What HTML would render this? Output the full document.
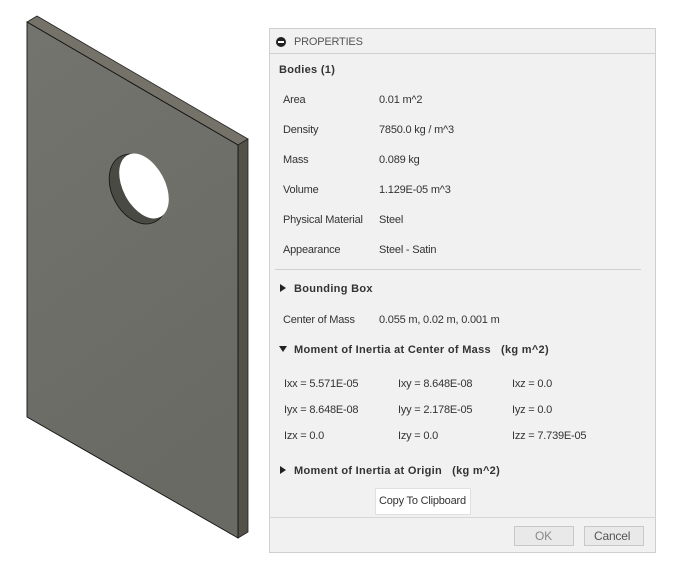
<!DOCTYPE html>
<html><head><style>
*{margin:0;padding:0;box-sizing:border-box}
body{width:677px;height:572px;background:#fff;position:relative;overflow:hidden;font-family:"Liberation Sans",sans-serif;font-size:11px;color:#333;letter-spacing:-0.2px}
.t{position:absolute;white-space:nowrap;line-height:12px}
.b{font-weight:bold;color:#333;letter-spacing:0.3px}
#panel{position:absolute;left:269px;top:28px;width:387px;height:525px;background:#f1f1f1;border:1px solid #cfcfcf}
.tri{position:absolute;width:0;height:0}
</style></head><body>
<svg width="260" height="572" style="position:absolute;left:0;top:0">
<defs><linearGradient id="g" x1="0" y1="0" x2="0.3" y2="1"><stop offset="0" stop-color="#74746e"/><stop offset="1" stop-color="#6a6a64"/></linearGradient></defs>
<polygon points="27,22 37,16 248,139 238,145" fill="#75726a" stroke="#222" stroke-width="0.8" stroke-linejoin="round"/>
<polygon points="238,145 248,139 248,532 238,538" fill="#545149" stroke="#222" stroke-width="0.8"/>
<polygon points="27,22 238,145 238,538 27,417" fill="url(#g)" stroke="#111" stroke-width="0.9"/>
<ellipse cx="138" cy="189" rx="26" ry="37" transform="rotate(-28 138 189)" fill="#4a4a45" stroke="#111" stroke-width="0.8"/>
<ellipse cx="144" cy="186" rx="21" ry="35" transform="rotate(-28 144 186)" fill="#fff"/>
</svg>
<div id="panel"></div>
<div style="position:absolute;left:269px;top:53px;width:387px;height:1px;background:#cfcfcf"></div>
<div style="position:absolute;left:276px;top:37px;width:10px;height:10px;border-radius:50%;background:#222"></div>
<div style="position:absolute;left:278px;top:41px;width:6px;height:2px;background:#fff"></div>
<div class="t" style="left:294px;top:36px;color:#555">PROPERTIES</div>
<div class="t b" style="left:279px;top:64px">Bodies (1)</div>
<div class="t" style="left:283px;top:94px">Area</div><div class="t" style="left:379px;top:94px">0.01 m^2</div>
<div class="t" style="left:283px;top:124px">Density</div><div class="t" style="left:379px;top:124px">7850.0 kg / m^3</div>
<div class="t" style="left:283px;top:154px">Mass</div><div class="t" style="left:379px;top:154px">0.089 kg</div>
<div class="t" style="left:283px;top:184px">Volume</div><div class="t" style="left:379px;top:184px">1.129E-05 m^3</div>
<div class="t" style="left:283px;top:214px">Physical Material</div><div class="t" style="left:379px;top:214px">Steel</div>
<div class="t" style="left:283px;top:244px">Appearance</div><div class="t" style="left:379px;top:244px">Steel - Satin</div>
<div style="position:absolute;left:275px;top:269px;width:366px;height:1px;background:#cfcfcf"></div>
<div class="tri" style="left:280px;top:284px;border-left:6px solid #222;border-top:4px solid transparent;border-bottom:4px solid transparent"></div>
<div class="t b" style="left:294px;top:283px">Bounding Box</div>
<div class="t" style="left:283px;top:314px">Center of Mass</div><div class="t" style="left:379px;top:314px">0.055 m, 0.02 m, 0.001 m</div>
<div class="tri" style="left:279px;top:346px;border-top:6px solid #222;border-left:4px solid transparent;border-right:4px solid transparent"></div>
<div class="t b" style="left:294px;top:344px">Moment of Inertia at Center of Mass&nbsp;&nbsp;&nbsp;(kg m^2)</div>
<div class="t" style="left:284px;top:378px">Ixx = 5.571E-05</div><div class="t" style="left:398px;top:378px">Ixy = 8.648E-08</div><div class="t" style="left:512px;top:378px">Ixz = 0.0</div>
<div class="t" style="left:284px;top:404px">Iyx = 8.648E-08</div><div class="t" style="left:398px;top:404px">Iyy = 2.178E-05</div><div class="t" style="left:512px;top:404px">Iyz = 0.0</div>
<div class="t" style="left:284px;top:430px">Izx = 0.0</div><div class="t" style="left:398px;top:430px">Izy = 0.0</div><div class="t" style="left:512px;top:430px">Izz = 7.739E-05</div>
<div class="tri" style="left:280px;top:466px;border-left:6px solid #222;border-top:4px solid transparent;border-bottom:4px solid transparent"></div>
<div class="t b" style="left:294px;top:465px">Moment of Inertia at Origin&nbsp;&nbsp;&nbsp;(kg m^2)</div>
<div style="position:absolute;left:375px;top:488px;width:96px;height:27px;background:#fff;border:1px solid #e0e0e0"></div>
<div class="t" style="left:379px;top:495px">Copy To Clipboard</div>
<div style="position:absolute;left:269px;top:517px;width:387px;height:1px;background:#d6d6d6"></div>
<div style="position:absolute;left:514px;top:526px;width:60px;height:20px;background:#e9e9e9;border:1px solid #c8c8c8"></div>
<div class="t" style="left:535px;top:530px;color:#888;font-size:12px">OK</div>
<div style="position:absolute;left:584px;top:526px;width:60px;height:20px;background:#e9e9e9;border:1px solid #c8c8c8"></div>
<div class="t" style="left:594px;top:530px;color:#555;font-size:12px">Cancel</div>
</body></html>
